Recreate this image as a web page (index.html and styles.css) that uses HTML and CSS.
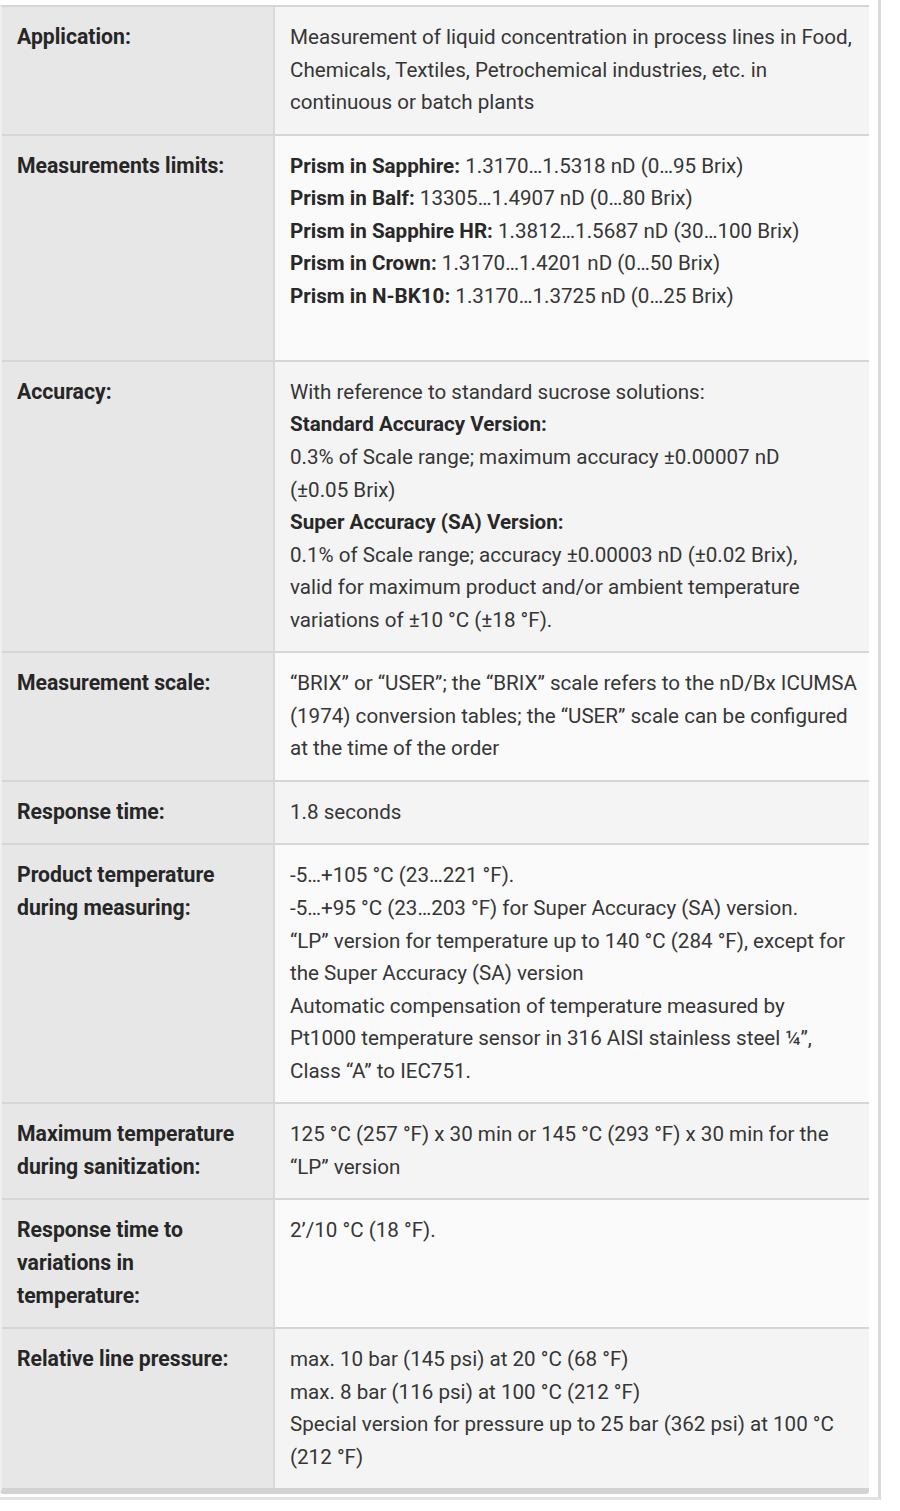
FILE: index.html
```html
<!DOCTYPE html>
<html lang="en">
<head>
<meta charset="utf-8">
<title>Technical specifications</title>
<link rel="stylesheet" href="styles.css">
</head>
<body>
<div class="frame">
  <table class="specs">
    <tbody>
      <tr>
        <th>Application:</th>
        <td>Measurement of liquid concentration in process lines in Food,<br>Chemicals, Textiles, Petrochemical industries, etc. in<br>continuous or batch plants</td>
      </tr>
      <tr>
        <th>Measurements limits:</th>
        <td><b>Prism in Sapphire:</b> 1.3170…1.5318 nD (0…95 Brix)<br><b>Prism in Balf:</b> 13305…1.4907 nD (0…80 Brix)<br><b>Prism in Sapphire HR:</b> 1.3812…1.5687 nD (30…100 Brix)<br><b>Prism in Crown:</b> 1.3170…1.4201 nD (0…50 Brix)<br><b>Prism in N-BK10:</b> 1.3170…1.3725 nD (0…25 Brix)<br><br></td>
      </tr>
      <tr>
        <th>Accuracy:</th>
        <td>With reference to standard sucrose solutions:<br><b>Standard Accuracy Version:</b><br>0.3% of Scale range; maximum accuracy ±0.00007 nD<br>(±0.05 Brix)<br><b>Super Accuracy (SA) Version:</b><br>0.1% of Scale range; accuracy ±0.00003 nD (±0.02 Brix),<br>valid for maximum product and/or ambient temperature<br>variations of ±10 °C (±18 °F).</td>
      </tr>
      <tr>
        <th>Measurement scale:</th>
        <td>“BRIX” or “USER”; the “BRIX” scale refers to the nD/Bx ICUMSA<br>(1974) conversion tables; the “USER” scale can be configured<br>at the time of the order</td>
      </tr>
      <tr>
        <th>Response time:</th>
        <td>1.8 seconds</td>
      </tr>
      <tr>
        <th>Product temperature<br>during measuring:</th>
        <td>-5…+105 °C (23…221 °F).<br>-5…+95 °C (23…203 °F) for Super Accuracy (SA) version.<br>“LP” version for temperature up to 140 °C (284 °F), except for<br>the Super Accuracy (SA) version<br>Automatic compensation of temperature measured by<br>Pt1000 temperature sensor in 316 AISI stainless steel ¼”,<br>Class “A” to IEC751.</td>
      </tr>
      <tr>
        <th>Maximum temperature<br>during sanitization:</th>
        <td>125 °C (257 °F) x 30 min or 145 °C (293 °F) x 30 min for the<br>“LP” version</td>
      </tr>
      <tr>
        <th>Response time to<br>variations in<br>temperature:</th>
        <td>2’/10 °C (18 °F).</td>
      </tr>
      <tr>
        <th>Relative line pressure:</th>
        <td>max. 10 bar (145 psi) at 20 °C (68 °F)<br>max. 8 bar (116 psi) at 100 °C (212 °F)<br>Special version for pressure up to 25 bar (362 psi) at 100 °C<br>(212 °F)</td>
      </tr>
    </tbody>
  </table>
</div>
</body>
</html>
```
FILE: styles.css
```css
html, body {
  margin: 0;
  padding: 0;
  background: #ffffff;
}

body {
  font-family: Roboto, "Liberation Sans", sans-serif;
  font-size: 20.6px;
  color: #363636;
}

.frame {
  width: 875px;
  padding: 5px 3px 3px 0;
  border-right: 3px solid #dadada;
  border-bottom: 3px solid #e2e2e2;
}

.specs {
  width: 869px;
  border-collapse: separate;
  border-spacing: 0;
  border-top: 2px solid #d6d6d6;
  border-left: 2px solid #efefef;
  border-bottom: 6px solid #d3d3d3;
  border-radius: 0 0 3px 3px;
}

.specs th,
.specs td {
  vertical-align: top;
  text-align: left;
  line-height: 32.55px;
  padding: 14px 6px 15px 15px;
  border-bottom: 2px solid #d6d6d6;
}

.specs tr:last-child th,
.specs tr:last-child td {
  border-bottom: none;
}

.specs th {
  width: 250px;
  background: #e7e7e7;
  border-right: 2px solid #d9d9d9;
  font-size: 21.2px;
  font-weight: 700;
  color: #262626;
  white-space: nowrap;
}

.specs td {
  background: #f4f4f4;
  white-space: nowrap;
}

.specs tr:nth-child(even) td {
  background: #fafafa;
}

.specs td b {
  font-weight: 700;
  color: #282828;
}
```
